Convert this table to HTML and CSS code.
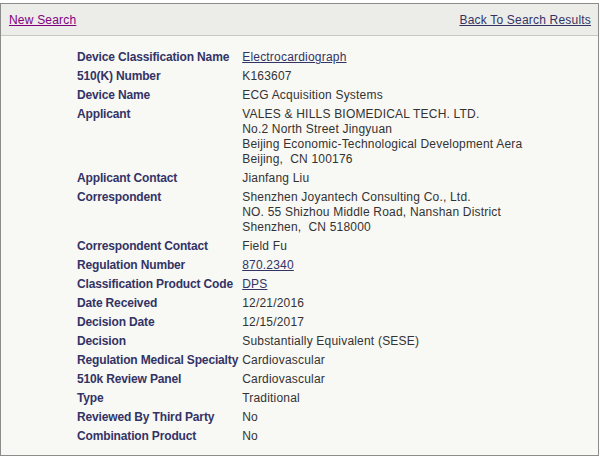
FILE: index.html
```html
<!DOCTYPE html>
<html>
<head>
<meta charset="utf-8">
<link rel="stylesheet" href="styles.css">
</head>
<body>
<div class="panel">
  <div class="bar">
    <a class="visited" href="#">New Search</a>
    <a href="#">Back To Search Results</a>
  </div>
  <div class="content">
    <table class="details">
      <tr><th>Device Classification Name</th><td><a href="#">Electrocardiograph</a></td></tr>
      <tr><th>510(K) Number</th><td>K163607</td></tr>
      <tr><th>Device Name</th><td>ECG Acquisition Systems</td></tr>
      <tr><th>Applicant</th><td>VALES &amp; HILLS BIOMEDICAL TECH. LTD.<br>No.2 North Street Jingyuan<br>Beijing Economic-Technological Development Aera<br>Beijing,&nbsp; CN 100176</td></tr>
      <tr><th>Applicant Contact</th><td>Jianfang Liu</td></tr>
      <tr><th>Correspondent</th><td>Shenzhen Joyantech Consulting Co., Ltd.<br>NO. 55 Shizhou Middle Road, Nanshan District<br>Shenzhen,&nbsp; CN 518000</td></tr>
      <tr><th>Correspondent Contact</th><td>Field Fu</td></tr>
      <tr><th>Regulation Number</th><td><a href="#">870.2340</a></td></tr>
      <tr><th>Classification Product Code</th><td><a href="#">DPS</a></td></tr>
      <tr><th>Date Received</th><td>12/21/2016</td></tr>
      <tr><th>Decision Date</th><td>12/15/2017</td></tr>
      <tr><th>Decision</th><td>Substantially Equivalent (SESE)</td></tr>
      <tr><th>Regulation Medical Specialty</th><td>Cardiovascular</td></tr>
      <tr><th>510k Review Panel</th><td>Cardiovascular</td></tr>
      <tr><th>Type</th><td>Traditional</td></tr>
      <tr><th>Reviewed By Third Party</th><td>No</td></tr>
      <tr><th>Combination Product</th><td>No</td></tr>
    </table>
  </div>
</div>
</body>
</html>
```
FILE: styles.css
```css
html, body {
  margin: 0;
  padding: 0;
  background: #ffffff;
}
body {
  font-family: "Liberation Sans", Arial, sans-serif;
  font-size: 12px;
  color: #333333;
  padding-top: 3px;
}
.panel {
  width: 597px;
  border: 1px solid #8c8c8c;
  background: #f8f8f4;
}
.bar {
  display: flex;
  justify-content: space-between;
  align-items: center;
  height: 31px;
  padding: 0 7px 0 8px;
  background: #ececE8;
  border-bottom: 1px solid #c8c8c4;
  letter-spacing: 0.2px;
}
.bar a {
  color: #333366;
  text-decoration: underline;
}
.bar a.visited {
  color: #800080;
}
.content {
  padding: 12px 0 9px 74px;
}
.details {
  border-collapse: collapse;
}
.details th,
.details td {
  padding: 2px 2px;
  line-height: 15px;
  vertical-align: top;
  text-align: left;
  white-space: nowrap;
}
.details th {
  font-weight: bold;
  color: #333366;
  letter-spacing: -0.15px;
}
.details td {
  color: #333333;
  letter-spacing: 0.2px;
}
.details a {
  color: #333366;
  text-decoration: underline;
}
```
